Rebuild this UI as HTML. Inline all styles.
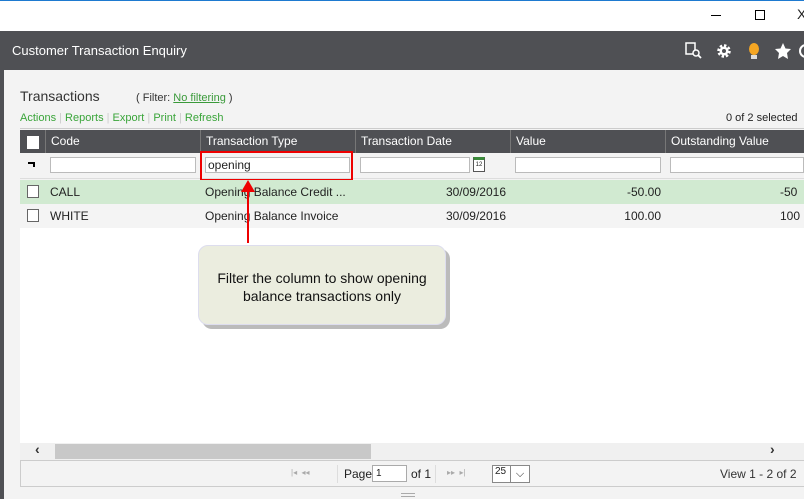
<!DOCTYPE html>
<html><head><style>
*{margin:0;padding:0;box-sizing:border-box}
body{width:804px;height:499px;overflow:hidden;background:#fff;font-family:"Liberation Sans",Arial,sans-serif;position:relative;font-size:12px;color:#222}
.a{position:absolute}
.n{font-stretch:condensed}
.hd{color:#fff;font-size:12px;top:130px;height:23px;line-height:23px;padding-left:5px;border-left:1px solid #777}
.inp{background:#fff;border:1px solid #bbb;height:16px;top:157px}
.cell{height:24px;line-height:24px;font-size:12px}
.cb{width:12px;height:13px;border:1px solid #666;background:#fff}
</style></head><body>
<div class="a" style="left:0;top:0;width:804px;height:1px;background:#1e7ad0"></div>
<div class="a" style="left:711px;top:15px;width:10px;height:1px;background:#000"></div>
<div class="a" style="left:755px;top:10px;width:10px;height:10px;border:1px solid #000"></div>
<div class="a" style="left:797px;top:6px;font-size:14px">X</div>
<div class="a" style="left:0;top:31px;width:804px;height:468px;background:#4f5054"></div>
<div class="a" style="left:12px;top:43px;color:#fff;font-size:13px">Customer Transaction Enquiry</div>
<svg class="a" style="left:684px;top:41px" width="120" height="20">
<rect x="2" y="2" width="9" height="11" fill="none" stroke="#fff" stroke-width="1.5"/><circle cx="12" cy="12" r="3" fill="#4f5054" stroke="#fff" stroke-width="1.5"/><line x1="14" y1="14" x2="17" y2="17" stroke="#fff" stroke-width="1.8"/>
<circle cx="40" cy="10" r="5" fill="none" stroke="#fff" stroke-width="3.5" stroke-dasharray="2.2 1.7"/><circle cx="40" cy="10" r="4.5" fill="#fff"/><circle cx="40" cy="10" r="2" fill="#4f5054"/>
<ellipse cx="70" cy="8" rx="5" ry="6" fill="#f5a623"/><rect x="67" y="14" width="6" height="4" fill="#ddd"/>
<polygon points="99,2 101.5,7.5 107,8 103,12 104,18 99,15 94,18 95,12 91,8 96.5,7.5" fill="#fff"/>
<circle cx="122" cy="10" r="6" fill="none" stroke="#fff" stroke-width="2"/>
</svg>
<div class="a" style="left:4px;top:70px;width:800px;height:429px;background:#f3f3f3"></div>
<div class="a n" style="left:20px;top:88px;font-size:14px;color:#333">Transactions</div>
<div class="a n" style="left:136px;top:92px;font-size:11px;color:#333">( Filter: <span style="color:#3a9a3a;text-decoration:underline">No filtering</span> )</div>
<div class="a n" style="left:20px;top:112px;font-size:11px;color:#3aa53a">Actions <span style="color:#ccc">|</span> Reports <span style="color:#ccc">|</span> Export <span style="color:#ccc">|</span> Print <span style="color:#ccc">|</span> Refresh</div>
<div class="a n" style="left:726px;top:112px;font-size:11px;color:#222">0 of 2 selected</div>
<div class="a" style="left:20px;top:128px;width:784px;height:1px;background:#ccc"></div>
<div class="a" style="left:20px;top:130px;width:784px;height:23px;background:#4f5054"></div>
<div class="a" style="left:27px;top:136px;width:12px;height:13px;background:#fff"></div>
<div class="a hd" style="left:45px;width:155px">Code</div>
<div class="a hd" style="left:200px;width:155px">Transaction Type</div>
<div class="a hd" style="left:355px;width:155px">Transaction Date</div>
<div class="a hd" style="left:510px;width:155px">Value</div>
<div class="a hd" style="left:665px;width:139px">Outstanding Value</div>
<div class="a" style="left:20px;top:153px;width:784px;height:26px;background:#f3f3f3;border-bottom:1px solid #ddd"></div>
<div class="a" style="left:28px;top:162px;width:7px;height:2px;background:#000"></div>
<div class="a" style="left:33px;top:162px;width:2px;height:5px;background:#000"></div>
<div class="a inp" style="left:50px;width:146px"></div>
<div class="a inp" style="left:205px;width:145px;font-size:12px;line-height:14px;padding-left:2px">opening</div>
<div class="a" style="left:200px;top:151px;width:153px;height:30px;border:2px solid #e00"></div>
<div class="a inp" style="left:360px;width:110px"></div>
<div class="a" style="left:473px;top:157px;width:12px;height:15px;background:#fff;border:1px solid #555;border-top:3px solid #3a8a3a;font-size:6px;text-align:center;line-height:10px">12</div>
<div class="a inp" style="left:515px;width:146px"></div>
<div class="a inp" style="left:670px;width:134px"></div>
<div class="a" style="left:20px;top:180px;width:784px;height:263px;background:#fff"></div>
<div class="a" style="left:20px;top:180px;width:784px;height:24px;background:#d1ead1"></div>
<div class="a" style="left:20px;top:204px;width:784px;height:24px;background:#f4f4f4"></div>
<div class="a cb" style="left:27px;top:185px"></div>
<div class="a cb" style="left:27px;top:209px"></div>
<div class="a cell" style="left:50px;top:180px">CALL</div>
<div class="a cell" style="left:205px;top:180px">Opening Balance Credit ...</div>
<div class="a cell" style="left:355px;top:180px;width:151px;text-align:right">30/09/2016</div>
<div class="a cell" style="left:510px;top:180px;width:151px;text-align:right">-50.00</div>
<div class="a cell" style="left:780px;top:180px">-50</div>
<div class="a cell" style="left:50px;top:204px">WHITE</div>
<div class="a cell" style="left:205px;top:204px">Opening Balance Invoice</div>
<div class="a cell" style="left:355px;top:204px;width:151px;text-align:right">30/09/2016</div>
<div class="a cell" style="left:510px;top:204px;width:151px;text-align:right">100.00</div>
<div class="a cell" style="left:780px;top:204px">100</div>
<div class="a" style="left:247px;top:188px;width:2px;height:55px;background:#e00"></div>
<svg class="a" style="left:241px;top:180px" width="14" height="12"><polygon points="7,0 14,12 0,12" fill="#e00"/></svg>
<div class="a" style="left:202px;top:249px;width:248px;height:80px;background:#bbb;border-radius:10px"></div>
<div class="a" style="left:198px;top:245px;width:248px;height:80px;background:#ebeddf;border-radius:10px;border:1px solid #dde;font-size:14px;text-align:center;padding-top:23px;line-height:18px;color:#111">Filter the column to show opening<br>balance transactions only</div>
<div class="a" style="left:20px;top:443px;width:784px;height:17px;background:#f0f0f0"></div>
<div class="a" style="left:55px;top:444px;width:316px;height:15px;background:#c8c8c8"></div>
<div class="a" style="left:35px;top:441px;font-size:14px;font-weight:bold;color:#333">‹</div>
<div class="a" style="left:770px;top:441px;font-size:14px;font-weight:bold;color:#333">›</div>
<div class="a" style="left:20px;top:460px;width:784px;height:27px;background:#f3f3f3;border-top:1px solid #ccc;border-bottom:1px solid #ccc;border-left:1px solid #ccc"></div>
<div class="a" style="left:291px;top:468px;font-size:8px;color:#aaa">|◂ &nbsp;◂◂</div>
<div class="a" style="left:337px;top:465px;width:1px;height:18px;background:#ddd"></div>
<div class="a n" style="left:344px;top:467px;font-size:12px">Page</div>
<div class="a" style="left:372px;top:465px;width:35px;height:17px;background:#fff;border:1px solid #aaa;font-size:10px;padding-left:3px;line-height:15px">1</div>
<div class="a n" style="left:411px;top:467px;font-size:12px">of 1</div>
<div class="a" style="left:435px;top:465px;width:1px;height:18px;background:#ddd"></div>
<div class="a" style="left:447px;top:468px;font-size:8px;color:#aaa">▸▸ &nbsp;▸|</div>
<div class="a" style="left:492px;top:465px;width:38px;height:18px;background:#fff;border:1px solid #888;font-size:10px;padding-left:2px">25</div>
<div class="a" style="left:510px;top:466px;width:19px;height:16px;border-left:1px solid #888;font-size:11px;text-align:center;line-height:16px">⌵</div>
<div class="a n" style="left:720px;top:467px;font-size:12px;color:#333">View 1 - 2 of 2</div>
<div class="a" style="left:401px;top:493px;width:14px;height:1px;background:#aaa"></div>
<div class="a" style="left:401px;top:496px;width:14px;height:1px;background:#aaa"></div>
</body></html>
